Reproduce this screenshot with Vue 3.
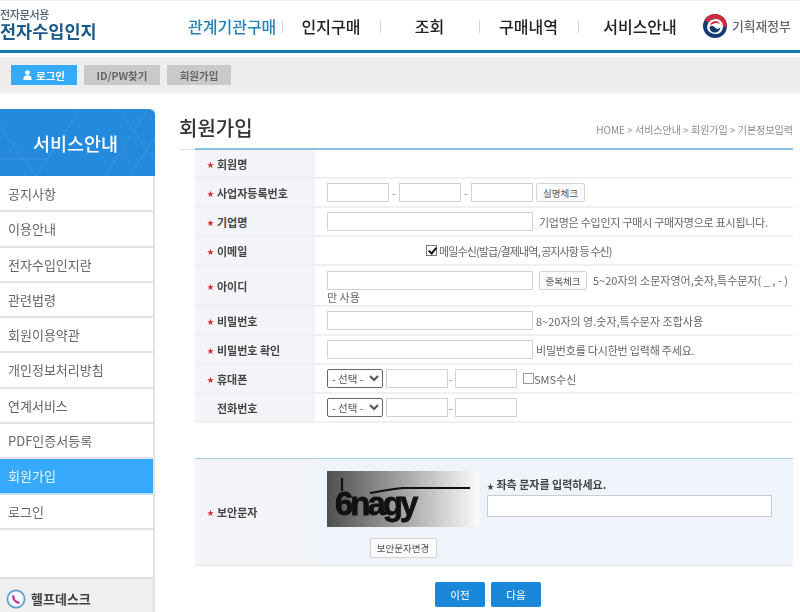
<script setup>
const gnb = [
  { name: "관계기관구매", width: 94, active: true },
  { name: "인지구매", width: 98 },
  { name: "조회", width: 99 },
  { name: "구매내역", width: 99 },
  { name: "서비스안내", width: 124 },
];
const snb = [
  "공지사항",
  "이용안내",
  "전자수입인지란",
  "관련법령",
  "회원이용약관",
  "개인정보처리방침",
  "연계서비스",
  "PDF인증서등록",
  "회원가입",
  "로그인",
];
</script>

<template>
  <div class="page">
    <header class="top">
      <div class="logo">
        <span class="logo-sub">전자문서용</span>
        <strong class="logo-main">전자수입인지</strong>
      </div>
      <nav class="gnb">
        <a
          v-for="item in gnb"
          :key="item.name"
          class="gnb-item"
          :class="{ active: item.active }"
          :style="{ width: item.width + 'px' }"
          >{{ item.name }}</a
        >
      </nav>
      <div class="ministry">
        <svg width="26" height="26" viewBox="0 0 26 26">
          <circle cx="13" cy="13" r="12" fill="#143a73" />
          <path d="M2.6 7A12 12 0 0 1 25 13.4L20.5 14A7.6 7.6 0 0 0 6.5 9.5Z" fill="#d42b3e" />
          <path d="M5.2 14.5C5.2 9.5 9 6 13.5 6S21 9.5 21 13.5C21 18 17.5 21 14.5 21 9 21 5.2 18.5 5.2 14.5Z" fill="#fff" />
          <path d="M7.5 14.2C9 11.8 11.5 12.5 13 14.5S17.5 16 18.3 14C18.4 17.5 15.5 19.5 13 19.5 10 19.5 7.8 17.5 7.5 14.2Z" fill="#143a73" />
          <path d="M8 12C9 9 11.5 8 13.5 8S17.5 9.5 18 11.5C16.5 9.8 14 9.6 12.5 10.3S9.5 11.5 8 12Z" fill="#d42b3e" />
        </svg>
        <span>기획재정부</span>
      </div>
    </header>

    <div class="tabs">
      <a class="tab on">
        <svg width="9" height="10" viewBox="0 0 9 10">
          <circle cx="4.5" cy="2.6" r="2.4" fill="#fff" />
          <path d="M0.5 10V8C0.5 6 2.5 5.2 4.5 5.2S8.5 6 8.5 8V10Z" fill="#fff" />
        </svg>
        로그인
      </a>
      <a class="tab idpw">ID/PW찾기</a>
      <a class="tab join">회원가입</a>
    </div>

    <div class="body">
      <aside class="side">
        <div class="side-head">
          <svg class="side-lines" width="155" height="67" viewBox="0 0 155 67">
            <path d="M0 18L36 67M0 50H48M36 67L80 0M105 67L148 0M118 0L155 52M130 67L155 28" fill="none" stroke="#3a95e0" stroke-width="1" />
          </svg>
          <span>서비스안내</span>
        </div>
        <ul class="snb">
          <li v-for="item in snb" :key="item" :class="{ on: item === '회원가입' }">{{ item }}</li>
        </ul>
        <div class="help">
          <svg width="20" height="20" viewBox="0 0 20 20">
            <circle cx="10" cy="10" r="8.6" fill="#f6f8fb" stroke="#5a9ccb" stroke-width="1.6" />
            <path d="M7 5.5C5.5 7 6 10 8 12.3S12.5 15.5 14 14.2L12.3 12C11.5 12.5 10.5 12 9.6 10.8S8.3 8.6 9 8Z" fill="#b8389a" />
          </svg>
          <strong>헬프데스크</strong>
        </div>
      </aside>

      <main class="main">
        <div class="main-head">
          <h1>회원가입</h1>
          <p class="crumb">HOME &gt; 서비스안내 &gt; 회원가입 &gt; 기본정보입력</p>
        </div>

        <section class="form">
          <div class="row">
            <div class="th"><i>★</i>회원명</div>
            <div class="td"></div>
          </div>
          <div class="row">
            <div class="th"><i>★</i>사업자등록번호</div>
            <div class="td">
              <input class="ipt s" type="text" /><span class="dash">-</span>
              <input class="ipt s" type="text" /><span class="dash">-</span>
              <input class="ipt s" type="text" />
              <button class="btn check" type="button">실명체크</button>
            </div>
          </div>
          <div class="row">
            <div class="th"><i>★</i>기업명</div>
            <div class="td">
              <input class="ipt l" type="text" />
              <span class="hint company">기업명은 수입인지 구매시 구매자명으로 표시됩니다.</span>
            </div>
          </div>
          <div class="row">
            <div class="th"><i>★</i>이메일</div>
            <div class="td mail">
              <input class="chk" type="checkbox" checked />
              <span class="hint">메일수신(발급/결제내역, 공지사항 등 수신)</span>
            </div>
          </div>
          <div class="row tall">
            <div class="th"><i>★</i>아이디</div>
            <div class="td flow">
              <input class="ipt l" type="text" />
              <button class="btn dup" type="button">중복체크</button>
              <span class="hint">5~20자의 소문자영어,숫자,특수문자( _ , - )</span>
              <span class="hint more">만 사용</span>
            </div>
          </div>
          <div class="row">
            <div class="th"><i>★</i>비밀번호</div>
            <div class="td">
              <input class="ipt l" type="text" />
              <span class="hint near">8~20자의 영.숫자,특수문자 조합사용</span>
            </div>
          </div>
          <div class="row">
            <div class="th"><i>★</i>비밀번호 확인</div>
            <div class="td">
              <input class="ipt l" type="text" />
              <span class="hint near tight">비밀번호를 다시한번 입력해 주세요.</span>
            </div>
          </div>
          <div class="row">
            <div class="th"><i>★</i>휴대폰</div>
            <div class="td">
              <select class="sel"><option>- 선택 -</option></select>
              <input class="ipt m" type="text" /><span class="dash tight">-</span>
              <input class="ipt m" type="text" />
              <input class="chk sms" type="checkbox" />
              <span class="hint">SMS수신</span>
            </div>
          </div>
          <div class="row">
            <div class="th plain">전화번호</div>
            <div class="td">
              <select class="sel"><option>- 선택 -</option></select>
              <input class="ipt m" type="text" /><span class="dash tight">-</span>
              <input class="ipt m" type="text" />
            </div>
          </div>
        </section>

        <section class="captcha">
          <div class="th"><i>★</i>보안문자</div>
          <div class="captcha-body">
            <div class="captcha-left">
              <div class="captcha-img">
                <svg width="152" height="56" viewBox="0 0 152 56">
                  <path d="M15 7V20M43 22C55 20 64 18 76 17H143" fill="none" stroke="#111" stroke-width="2.2" />
                </svg>
                <span>6nagy</span>
              </div>
              <button class="btn change" type="button">보안문자변경</button>
            </div>
            <div class="captcha-right">
              <label><b>★</b> 좌측 문자를 입력하세요.</label>
              <input class="ipt code" type="text" />
            </div>
          </div>
        </section>

        <div class="actions">
          <button class="go" type="button">이전</button>
          <button class="go" type="button">다음</button>
        </div>
      </main>
    </div>
  </div>
</template>

<style>
html,
body {
  margin: 0;
  overflow: hidden;
}
</style>

<style scoped>
.page {
  width: 800px;
  height: 612px;
  overflow: hidden;
  font-family: "Noto Sans CJK KR", "Noto Sans", sans-serif;
  color: #555;
  display: flex;
  flex-direction: column;
  filter: blur(0.35px);
}

.top {
  height: 49px;
  flex: none;
  border-top: 1px solid #f0f0f0;
  border-bottom: 3px solid #1878ae;
  display: flex;
  align-items: center;
}
.logo {
  width: 188px;
  flex: none;
  display: flex;
  flex-direction: column;
  margin-bottom: 2px;
}
.logo-sub {
  font-size: 11px;
  line-height: 13px;
  font-weight: 500;
  color: #4e5f74;
  letter-spacing: -0.3px;
}
.logo-main {
  font-size: 17.5px;
  line-height: 20px;
  font-weight: 700;
  color: #1d5a8c;
}
.gnb {
  display: flex;
  flex: none;
}
.gnb-item {
  font-size: 16px;
  line-height: 18px;
  font-weight: 500;
  color: #222;
  position: relative;
  text-align: center;
}
.gnb-item.active {
  color: #2384b8;
  text-align: left;
}
.gnb-item + .gnb-item::before {
  content: "";
  position: absolute;
  left: 0;
  top: 3px;
  height: 13px;
  width: 1px;
  background: #d5d5d5;
}
.ministry {
  display: flex;
  align-items: center;
  gap: 4px;
  font-size: 12.8px;
  font-weight: 500;
  color: #666;
  white-space: nowrap;
}

.tabs {
  margin-top: 4px;
  height: 36px;
  flex: none;
  background: #eeeeee;
  display: flex;
  align-items: center;
  padding-left: 11px;
  gap: 7px;
}
.tab {
  height: 20px;
  display: flex;
  align-items: center;
  justify-content: center;
  gap: 4px;
  background: #c9c9c9;
  font-size: 10.5px;
  font-weight: 700;
  color: #666;
}
.tab.on {
  width: 66px;
  background: #35aaf8;
  color: #fff;
}
.tab.idpw {
  width: 76px;
}
.tab.join {
  width: 64px;
}

.body {
  flex: 1;
  display: flex;
  min-height: 0;
}
.side {
  width: 155px;
  flex: none;
  margin-top: 16px;
  box-sizing: border-box;
  border-right: 2px solid #e2e2e2;
  display: flex;
  flex-direction: column;
}
.side-head {
  height: 67px;
  flex: none;
  margin-right: -2px;
  box-sizing: border-box;
  padding-right: 4px;
  background: #2589dc;
  border-top-right-radius: 6px;
  color: #fff;
  font-size: 18.5px;
  font-weight: 500;
  display: flex;
  align-items: center;
  justify-content: center;
  position: relative;
  overflow: hidden;
}
.side-head span {
  position: relative;
}
.side-lines {
  position: absolute;
  left: 0;
  top: 0;
}
.snb {
  list-style: none;
  margin: 1px 0 0;
  padding: 0;
}
.snb li {
  height: 35.3px;
  box-sizing: border-box;
  padding-left: 8px;
  border-bottom: 2px solid #e2e2e2;
  font-size: 13px;
  line-height: 33px;
  color: #666;
}
.snb li.on {
  background: #36a9fb;
  color: #e9f5ff;
  border-bottom-color: #bfe2fb;
}
.help {
  margin-top: auto;
  height: 35px;
  flex: none;
  box-sizing: border-box;
  background: #efefef;
  border-top: 2px solid #e2e2e2;
  display: flex;
  align-items: center;
  gap: 5px;
  padding: 6px 0 0 6px;
}
.help strong {
  font-size: 13px;
  font-weight: 700;
  color: #444;
}

.main {
  flex: 1;
  min-width: 0;
  padding: 16px 7px 0 24px;
}
.main-head {
  height: 41px;
  box-sizing: border-box;
  border-bottom: 1px solid #e2e2e2;
  display: flex;
  align-items: center;
  justify-content: space-between;
}
.main-head h1 {
  margin: 0 0 3px;
  font-size: 20px;
  font-weight: 500;
  color: #333;
}
.crumb {
  margin: 0;
  font-size: 10px;
  color: #8c8c8c;
  white-space: nowrap;
}

.form,
.captcha {
  margin-left: 16px;
}
.form {
  border-top: 2px solid #8cc0e2;
  margin-top: -2px;
  position: relative;
}
.row {
  display: flex;
  height: 29px;
  box-sizing: border-box;
  border-bottom: 2px solid #f0f0f0;
}
.row.tall {
  height: 41px;
}
.th {
  width: 120px;
  flex: none;
  box-sizing: border-box;
  background: #f3f4f8;
  padding-left: 12px;
  display: flex;
  align-items: center;
  font-size: 11px;
  font-weight: 700;
  color: #444;
}
.th i {
  width: 10px;
  flex: none;
  font-style: normal;
  color: #d7262c;
  font-size: 7px;
}
.th.plain {
  padding-left: 22px;
}
.td {
  flex: 1;
  min-width: 0;
  box-sizing: border-box;
  padding-left: 12px;
  display: flex;
  align-items: center;
  font-size: 11px;
  color: #666;
}
.td.mail {
  padding-left: 111px;
}
.td.mail .hint {
  letter-spacing: -0.9px;
}
.td.flow {
  display: block;
  padding-top: 5px;
  line-height: 18px;
}
.td.flow .ipt {
  vertical-align: top;
}
.td.flow .hint {
  margin-left: 6px;
}
.td.flow .hint.more {
  display: block;
  margin-left: 0;
  line-height: 14px;
}
.ipt {
  height: 19px;
  box-sizing: border-box;
  border: 1px solid #d2d2d2;
  background: #fff;
  margin: 0;
  padding: 0;
}
.ipt.s {
  width: 62px;
}
.ipt.l {
  width: 206px;
}
.ipt.m {
  width: 62px;
  margin-left: 3px;
}
.dash {
  width: 10px;
  text-align: center;
  color: #888;
}
.dash.tight {
  width: 3px;
  margin-left: 1px;
}
.sel {
  width: 56px;
  height: 19px;
  box-sizing: border-box;
  border: 1px solid #666;
  border-radius: 2px;
  background: #fff;
  font-family: inherit;
  font-size: 10.5px;
  color: #555;
  margin: 0;
  padding: 0;
}
.chk {
  appearance: none;
  width: 11px;
  height: 11px;
  box-sizing: border-box;
  border: 1px solid #777;
  background: #fff;
  margin: 0 2px 0 0;
  position: relative;
  flex: none;
}
.chk:checked::after {
  content: "";
  position: absolute;
  left: 2.5px;
  top: 0;
  width: 3px;
  height: 6px;
  border: solid #111;
  border-width: 0 2px 2px 0;
  transform: rotate(40deg);
}
.chk.sms {
  margin-left: 6px;
  margin-right: 0;
  border-color: #999;
}
.hint {
  white-space: nowrap;
}
.hint.company {
  margin-left: 6px;
  letter-spacing: -0.25px;
}
.hint.near {
  margin-left: 3px;
}
.hint.near.tight {
  letter-spacing: -0.2px;
}
.btn {
  height: 19px;
  box-sizing: border-box;
  border: 1px solid #d4d4d4;
  border-radius: 2px;
  background: #fbfbfb;
  font-family: inherit;
  font-size: 9.5px;
  color: #555;
  padding: 0;
  margin: 0;
  vertical-align: top;
}
.btn.check {
  width: 49px;
  margin-left: 3px;
}
.btn.dup {
  width: 48px;
  margin-left: 6px;
}
.btn.change {
  width: 67px;
  height: 20px;
}

.captcha {
  margin-top: 35px;
  height: 108px;
  box-sizing: border-box;
  display: flex;
  border-top: 1px solid #a4d2e2;
  border-bottom: 1px solid #e6e6e6;
  background: #eff4fb;
}
.captcha-body {
  flex: 1;
  display: flex;
  padding: 12px 0 0 12px;
  gap: 8px;
}
.captcha-left {
  width: 152px;
  flex: none;
  display: flex;
  flex-direction: column;
  align-items: center;
  gap: 11px;
}
.captcha-img {
  width: 152px;
  height: 56px;
  flex: none;
  position: relative;
  overflow: hidden;
  background: linear-gradient(90deg, #4f4f4f, #fafafa);
}
.captcha-img svg {
  position: absolute;
  left: 0;
  top: 0;
}
.captcha-img span {
  position: absolute;
  left: 8px;
  top: 13px;
  font-family: "Liberation Sans", sans-serif;
  font-size: 33px;
  line-height: 40px;
  font-weight: 700;
  letter-spacing: -3px;
  color: #111;
  -webkit-text-stroke: 0.8px #111;
}
.captcha-right {
  width: 285px;
  padding-top: 5px;
}
.captcha-right label {
  display: block;
  font-size: 11px;
  line-height: 16px;
  font-weight: 700;
  color: #444;
  margin-bottom: 1px;
}
.captcha-right b {
  font-size: 7px;
}
.ipt.code {
  display: block;
  width: 285px;
  height: 22px;
  border-color: #c9ccd4;
}
.actions {
  display: flex;
  justify-content: center;
  gap: 6px;
  margin-top: 16px;
  padding-left: 4px;
}
.go {
  width: 50px;
  height: 25px;
  border: 0;
  border-radius: 2px;
  background: #1b87d8;
  color: #dff0ff;
  font-family: inherit;
  font-size: 10.5px;
  font-weight: 500;
  padding: 0;
}
</style>
